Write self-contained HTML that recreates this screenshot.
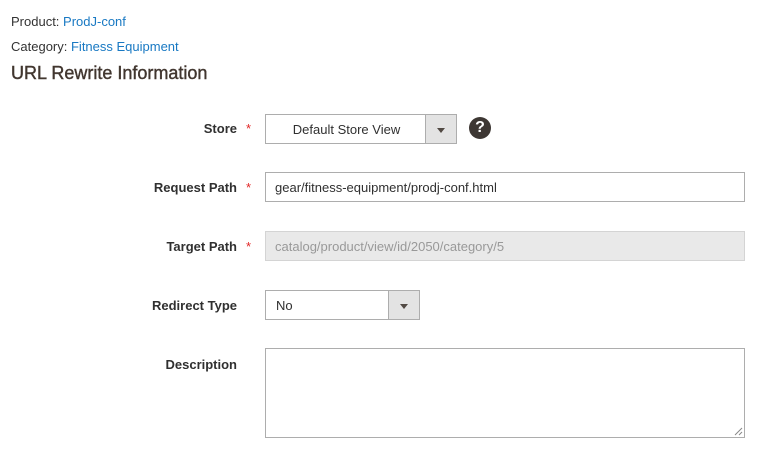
<!DOCTYPE html>
<html><head><style>
body{margin:0;width:768px;height:459px;background:#fff;font-family:"Liberation Sans",sans-serif;color:#333;position:relative;overflow:hidden}
.a{position:absolute}
.lnk{color:#1979c3}
.lbl{position:absolute;right:531px;font-size:13px;font-weight:bold;color:#303030;text-align:right}
.star{position:absolute;left:246px;color:#e22626;font-size:13px}
.box{position:absolute;left:265px;border:1px solid #adadad;background:#fff;box-sizing:border-box;font-size:13px;color:#303030}
.dd{position:absolute;right:0;top:0;bottom:0;width:30px;background:#e3e3e3;border-left:1px solid #adadad}
.dd:after{content:"";position:absolute;left:11px;top:13px;border:4px solid transparent;border-top:5px solid #514943;border-bottom:0}
</style></head><body>
<div class="a" style="left:11px;top:14px;font-size:13px">Product: <span class="lnk">ProdJ-conf</span></div>
<div class="a" style="left:11px;top:39px;font-size:13px">Category: <span class="lnk">Fitness Equipment</span></div>
<div class="a" style="left:11px;top:63px;font-size:18px;color:#41362f;-webkit-text-stroke:0.4px #41362f">URL Rewrite Information</div>

<div class="lbl" style="top:121px">Store</div><div class="star" style="top:121px">*</div>
<div class="box" style="top:114px;width:192px;height:30px"><div class="a" style="left:0;width:161px;text-align:center;top:7px">Default Store View</div><div class="dd"></div></div>
<div class="a" style="left:469px;top:117px;width:22px;height:22px;border-radius:50%;background:#3d3733;color:#fff;font-weight:bold;font-size:16px;text-align:center;line-height:22px">?</div>

<div class="lbl" style="top:180px">Request Path</div><div class="star" style="top:180px">*</div>
<div class="box" style="top:172px;width:480px;height:30px;padding:7px 0 0 9px">gear/fitness-equipment/prodj-conf.html</div>

<div class="lbl" style="top:239px">Target Path</div><div class="star" style="top:239px">*</div>
<div class="box" style="top:231px;width:480px;height:30px;padding:7px 0 0 9px;background:#e9e9e9;border-color:#d4d4d4;color:#999">catalog/product/view/id/2050/category/5</div>

<div class="lbl" style="top:298px">Redirect Type</div>
<div class="box" style="top:290px;width:155px;height:30px"><div class="a" style="left:10px;top:7px">No</div><div class="dd"></div></div>

<div class="lbl" style="top:357px">Description</div>
<div class="box" style="top:348px;width:480px;height:90px">
<svg class="a" style="right:1px;bottom:1px" width="9" height="9"><path d="M8 1L1 8M8 5L5 8" stroke="#888" stroke-width="1"/></svg>
</div>
</body></html>
